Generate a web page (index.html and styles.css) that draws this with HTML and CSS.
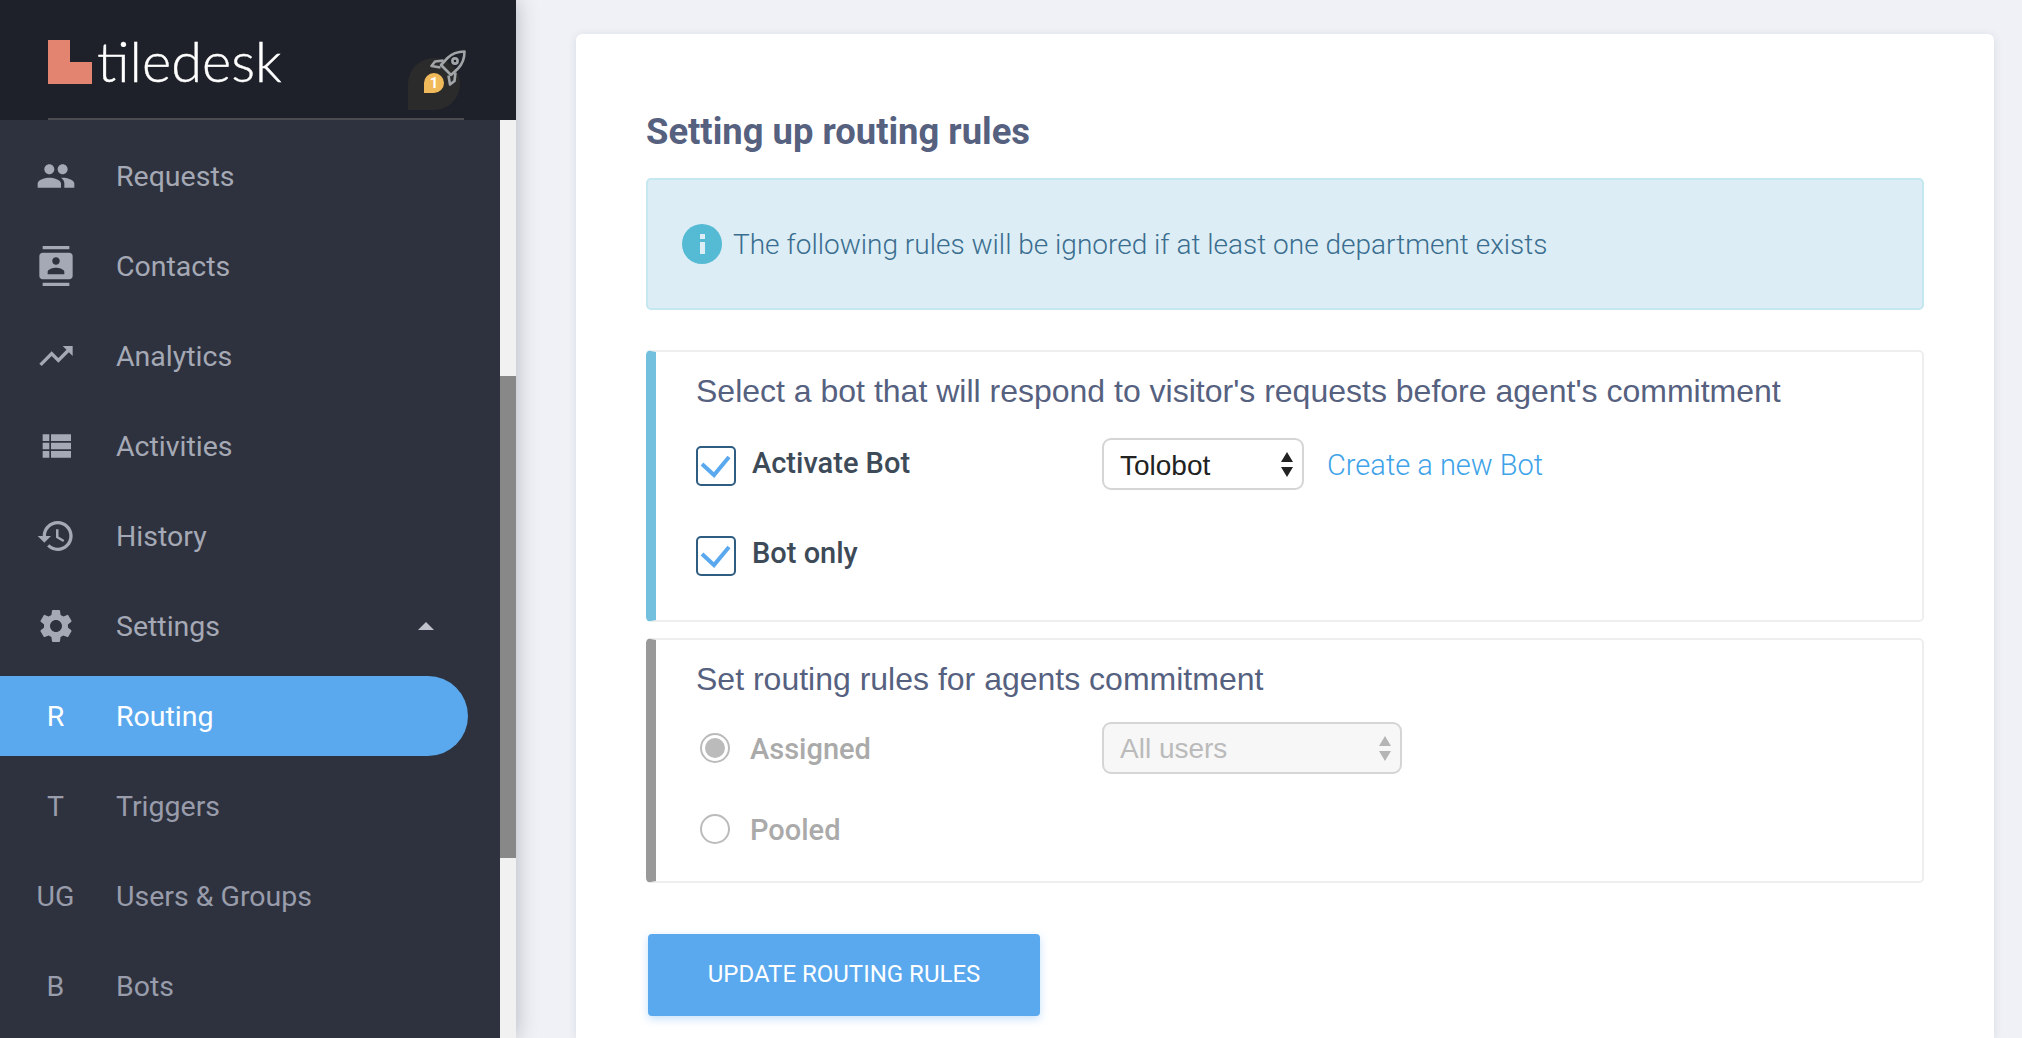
FILE: index.html
```html
<!DOCTYPE html>
<html lang="en">
<head>
  <meta charset="UTF-8">
  <title>Routing - tiledesk</title>
  <link rel="stylesheet" href="styles.css">
</head>
<body>
  <aside class="sidebar">
    <div class="brand">
      <div class="brand-inner">
        <div class="logo">
          <svg class="logo-mark" viewBox="0 0 44 44"><path d="M0 0H22V22H44V44H0Z" fill="#e28470"/></svg>
          <span class="logo-text">tiledesk</span>
        </div>
        <div class="launcher">
          <span class="badge">1</span>
          <svg class="rocket" viewBox="0 0 36 36" fill="none" stroke="#a2a5a7" stroke-width="2.6" stroke-linejoin="round">
            <path d="M34.500 1.500C28 1.500 22 3.500 17.500 8L11 15L21 25L28 18.500C32.500 14 34.500 8 34.500 1.500Z"/>
            <circle cx="25" cy="11" r="2.600"/>
            <path d="M13.500 10.500L5 11.500L1.500 16L10.500 17.500"/>
            <path d="M25.500 22.500L24.500 31L20 34.500L18.500 25.500"/>
          </svg>
        </div>
      </div>
    </div>
    <div class="side-body">
      <nav class="nav">
        <a class="nav-item">
          <span class="nav-icon"><svg viewBox="0 0 24 24"><path d="M16 11c1.660 0 2.990-1.340 2.990-3S17.660 5 16 5c-1.660 0-3 1.340-3 3s1.340 3 3 3zm-8 0c1.660 0 2.990-1.340 2.990-3S9.660 5 8 5C6.340 5 5 6.340 5 8s1.340 3 3 3zm0 2c-2.330 0-7 1.170-7 3.500V19h14v-2.500c0-2.330-4.670-3.500-7-3.500zm8 0c-.290 0-.620.020-.970.050 1.160.840 1.970 1.970 1.970 3.450V19h6v-2.500c0-2.330-4.670-3.500-7-3.500z"/></svg></span>
          <span>Requests</span>
        </a>
        <a class="nav-item">
          <span class="nav-icon"><svg viewBox="0 0 24 24"><path d="M20 0H4v2h16V0zM4 24h16v-2H4v2zM20 4H4c-1.100 0-2 .9-2 2v12c0 1.100.9 2 2 2h16c1.100 0 2-.9 2-2V6c0-1.100-.9-2-2-2zm-8 2.750c1.240 0 2.250 1.010 2.250 2.250s-1.010 2.250-2.250 2.250S9.750 10.240 9.750 9 10.760 6.750 12 6.750zM17 17H7v-1.500c0-1.670 3.330-2.500 5-2.500s5 .83 5 2.500V17z"/></svg></span>
          <span>Contacts</span>
        </a>
        <a class="nav-item">
          <span class="nav-icon"><svg viewBox="0 0 24 24"><path d="M16 6l2.290 2.290-4.880 4.880-4-4L2 16.590 3.410 18l6-6 4 4 6.300-6.290L22 12V6z"/></svg></span>
          <span>Analytics</span>
        </a>
        <a class="nav-item">
          <span class="nav-icon"><svg viewBox="0 0 24 24"><path d="M4 14h4v-4H4v4zm0 5h4v-4H4v4zM4 9h4V5H4v4zm5 5h12v-4H9v4zm0 5h12v-4H9v4zM9 5v4h12V5H9z"/></svg></span>
          <span>Activities</span>
        </a>
        <a class="nav-item">
          <span class="nav-icon"><svg viewBox="0 0 24 24"><path d="M13 3c-4.970 0-9 4.030-9 9H1l3.890 3.890.07.14L9 12H6c0-3.870 3.130-7 7-7s7 3.130 7 7-3.130 7-7 7c-1.930 0-3.680-.79-4.940-2.060l-1.420 1.420C8.270 19.990 10.510 21 13 21c4.970 0 9-4.030 9-9s-4.030-9-9-9zm-1 5v5l4.280 2.540.72-1.210-3.500-2.080V8H12z"/></svg></span>
          <span>History</span>
        </a>
        <a class="nav-item">
          <span class="nav-icon"><svg viewBox="0 0 24 24"><path d="M19.140 12.940c.04-.3.06-.61.06-.94 0-.32-.02-.64-.07-.94l2.030-1.580c.18-.14.23-.41.12-.61l-1.920-3.320c-.12-.22-.37-.29-.59-.22l-2.390.96c-.5-.38-1.030-.7-1.620-.94l-.36-2.540c-.04-.24-.24-.41-.48-.41h-3.840c-.24 0-.43.17-.47.41l-.36 2.540c-.59.24-1.130.57-1.620.94l-2.390-.96c-.22-.08-.47 0-.59.22L2.740 8.870c-.12.21-.08.47.12.61l2.030 1.580c-.05.3-.09.63-.09.94s.02.64.07.94l-2.030 1.580c-.18.14-.23.41-.12.61l1.920 3.320c.12.22.37.29.59.22l2.390-.96c.5.38 1.030.7 1.620.94l.36 2.54c.05.24.24.41.48.41h3.840c.24 0 .44-.17.47-.41l.36-2.540c.59-.24 1.130-.56 1.620-.94l2.390.96c.22.08.47 0 .59-.22l1.920-3.320c.12-.22.07-.47-.12-.61l-2.010-1.580zM12 15.600c-1.980 0-3.600-1.620-3.600-3.600s1.620-3.600 3.600-3.600 3.600 1.620 3.600 3.600-1.620 3.600-3.600 3.600z"/></svg></span>
          <span>Settings</span>
          <span class="caret"></span>
        </a>
        <a class="nav-item active">
          <span class="nav-icon">R</span>
          <span>Routing</span>
        </a>
        <a class="nav-item sub">
          <span class="nav-icon">T</span>
          <span>Triggers</span>
        </a>
        <a class="nav-item sub">
          <span class="nav-icon">UG</span>
          <span>Users &amp; Groups</span>
        </a>
        <a class="nav-item sub last">
          <span class="nav-icon">B</span>
          <span>Bots</span>
        </a>
      </nav>
      <div class="scrollbar"><div class="thumb"></div></div>
    </div>
  </aside>

  <main class="main">
    <section class="card">
      <h1 class="title">Setting up routing rules</h1>

      <div class="alert">
        <span class="alert-icon"><span class="alert-i"></span></span>
        <span>The following rules will be ignored if at least one department exists</span>
      </div>

      <div class="panel panel-blue">
        <h2 class="panel-title">Select a bot that will respond to visitor's requests before agent's commitment</h2>
        <div class="row row-first">
          <div class="check-col">
            <span class="checkbox"><svg viewBox="0 0 36 36"><path d="M4 16L16 27L31 9" fill="none" stroke="#5aa9ee" stroke-width="4"/></svg></span>
            <span class="check-label">Activate Bot</span>
          </div>
          <div class="select">
            <span>Tolobot</span>
            <svg class="updown" viewBox="0 0 14 25"><path d="M7 0L13 10H1ZM1 15H13L7 25Z" fill="#222"/></svg>
          </div>
          <a class="link">Create a new Bot</a>
        </div>
        <div class="row row-second">
          <div class="check-col">
            <span class="checkbox"><svg viewBox="0 0 36 36"><path d="M4 16L16 27L31 9" fill="none" stroke="#5aa9ee" stroke-width="4"/></svg></span>
            <span class="check-label">Bot only</span>
          </div>
        </div>
      </div>

      <div class="panel panel-grey">
        <h2 class="panel-title">Set routing rules for agents commitment</h2>
        <div class="row row-radio">
          <div class="radio-col">
            <span class="radio on"></span>
            <span class="radio-label">Assigned</span>
          </div>
          <div class="select select-off">
            <span>All users</span>
            <svg class="updown" viewBox="0 0 14 25"><path d="M7 0L13 10H1ZM1 15H13L7 25Z" fill="#b5b5b5"/></svg>
          </div>
        </div>
        <div class="row row-radio-second">
          <div class="radio-col">
            <span class="radio"></span>
            <span class="radio-label">Pooled</span>
          </div>
        </div>
      </div>

      <button class="update-btn">UPDATE ROUTING RULES</button>
    </section>
  </main>
</body>
</html>
```

FILE: styles.css
```css
html, body { margin: 0; height: 100%; }
body {
  display: flex;
  height: 1038px;
  overflow: hidden;
  background: #eff1f6;
  font-family: 'Roboto', sans-serif;
}

/* sidebar */
.sidebar {
  flex: 0 0 516px;
  display: flex;
  flex-direction: column;
  box-shadow: 0 0 20px rgba(40, 44, 60, 0.3);
  z-index: 2;
}
.brand { height: 120px; background: #1e2129; padding: 0 52px 0 48px; box-sizing: border-box; }
.brand-inner {
  height: 120px;
  display: flex;
  justify-content: space-between;
  border-bottom: 2px solid #4a4c52;
  box-sizing: border-box;
}
.logo { display: flex; align-items: flex-start; gap: 5px; padding-top: 40px; }
.logo-mark { width: 44px; height: 44px; }
.logo-text {
  font-family: 'Lato', sans-serif;
  font-weight: 300;
  font-size: 56px;
  line-height: 42px;
  color: #fff;
  -webkit-text-stroke: 0.4px #fff;
}
.launcher {
  position: relative;
  width: 52px;
  height: 52px;
  margin: 58px 4px 0 0;
  background: #2b2b2b;
  border-radius: 50% 50% 50% 0;
}
.badge {
  position: absolute;
  left: 16px;
  top: 15px;
  width: 20px;
  height: 20px;
  background: #f0b95a;
  border-radius: 50% 50% 50% 0;
  color: #fff;
  font: 700 15px/20px 'Roboto', sans-serif;
  text-align: center;
}
.rocket { position: absolute; left: 22px; top: -8px; width: 36px; height: 36px; }

.side-body { flex: 1; display: flex; min-height: 0; }
.nav { flex: 0 0 500px; background: #2e323e; padding-top: 16px; box-sizing: border-box; }
.nav-item {
  display: flex;
  align-items: center;
  width: 468px;
  height: 80px;
  margin-bottom: 10px;
  font-size: 28.5px;
  color: #a5a9b5;
  border-radius: 0 40px 40px 0;
}
.nav-item.last { margin-bottom: 0; }
.nav-icon {
  flex: 0 0 111px;
  box-sizing: border-box;
  text-align: center;
  margin-right: 5px;
}
.nav-icon svg { display: block; width: 40px; height: 40px; margin-left: 36px; fill: #a5a9b5; }
.caret {
  margin-left: auto;
  margin-right: 34px;
  width: 0;
  height: 0;
  border-left: 8px solid transparent;
  border-right: 8px solid transparent;
  border-bottom: 8px solid #c0c3cb;
}
.nav-item.active { background: #5aa9ee; color: #fff; }
.nav-item.sub { color: #989cab; }
.scrollbar { flex: 0 0 16px; background: #f1f1f1; }
.thumb { height: 482px; margin-top: 256px; background: #888; }

/* content */
.main { flex: 1; min-width: 0; padding: 34px 28px 0 60px; box-sizing: border-box; height: 100%; }
.card {
  height: 100%;
  box-sizing: border-box;
  padding: 78px 70px 0;
  background: #fff;
  border-radius: 6px 6px 0 0;
  box-shadow: 0 1px 8px rgba(60, 70, 100, 0.12);
}
.title { margin: 0; font-size: 36.4px; line-height: 40px; font-weight: 700; color: #56617f; }
.alert {
  display: flex;
  align-items: center;
  gap: 11px;
  height: 132px;
  margin-top: 26px;
  padding-left: 34px;
  box-sizing: border-box;
  background: #dcedf5;
  border: 2px solid #c4e7f0;
  border-radius: 5px;
  color: #3a6d8f;
  font-size: 28px;
  font-weight: 300;
}
.alert-icon {
  display: flex;
  align-items: center;
  justify-content: center;
  width: 40px;
  height: 40px;
  border-radius: 50%;
  background: #55bad3;
}
.alert-i {
  width: 5px;
  height: 12px;
  margin-top: 7px;
  background: #dcedf5;
  position: relative;
}
.alert-i:before {
  content: "";
  position: absolute;
  left: 0;
  top: -8px;
  width: 5px;
  height: 5px;
  background: #dcedf5;
}

.panel {
  box-sizing: border-box;
  border: 2px solid #eee;
  border-left: 10px solid #72c0de;
  border-radius: 5px;
  padding: 19px 0 0 40px;
}
.panel-blue { height: 272px; margin-top: 40px; }
.panel-grey { height: 245px; margin-top: 16px; border-left-color: #999; }
.panel-title { margin: 0; font: 400 32px/40px 'Liberation Sans', sans-serif; color: #56617f; }
.row { display: flex; align-items: center; }
.row-first { margin-top: 27px; height: 52px; }
.row-second { margin-top: 46px; height: 40px; }
.row-radio { margin-top: 23px; height: 52px; }
.row-radio-second { margin-top: 40px; height: 30px; }
.check-col { flex: 0 0 406px; display: flex; align-items: center; gap: 16px; }
.checkbox {
  width: 40px;
  height: 40px;
  box-sizing: border-box;
  border: 2px solid #2f5d82;
  border-radius: 5px;
}
.row-first .checkbox { margin-top: 4px; }
.checkbox svg { display: block; width: 36px; height: 36px; }
.check-label {
  margin-bottom: 3px;
  font-size: 29px;
  font-weight: 500;
  color: #3d4a58;
}
.row-second .check-label { margin-bottom: 6px; }
.select {
  display: flex;
  align-items: center;
  justify-content: space-between;
  width: 202px;
  height: 52px;
  box-sizing: border-box;
  padding: 4px 8px 0 16px;
  border: 2px solid #d5d5d5;
  border-radius: 9px;
  font: 400 28px 'Liberation Sans', sans-serif;
  color: #222;
}
.updown { width: 14px; height: 25px; margin-top: -4px; }
.link { margin: 2px 0 0 23px; font-size: 29px; font-weight: 300; color: #3ea3e8; }
.radio-col { flex: 0 0 406px; display: flex; align-items: center; gap: 20px; padding-left: 4px; box-sizing: border-box; }
.radio {
  width: 30px;
  height: 30px;
  box-sizing: border-box;
  border: 2px solid #bbb;
  border-radius: 50%;
  background: #fff;
}
.radio.on { padding: 3px; background: #bbb content-box; }
.radio-label { margin-top: 2px; font-size: 29px; font-weight: 500; color: #aaa; }
.select-off { width: 300px; padding-top: 2px; background: #f7f7f7; color: #bbb; }
.select-off .updown { margin-top: -2px; }
.update-btn {
  display: block;
  width: 392px;
  height: 82px;
  margin: 51px 0 0 2px;
  padding-bottom: 4px;
  border: 0;
  border-radius: 4px;
  background: #5aa9ee;
  color: #fff;
  font: 400 24px 'Roboto', sans-serif;
  box-shadow: 0 3px 8px rgba(90, 169, 238, 0.35);
}
```
